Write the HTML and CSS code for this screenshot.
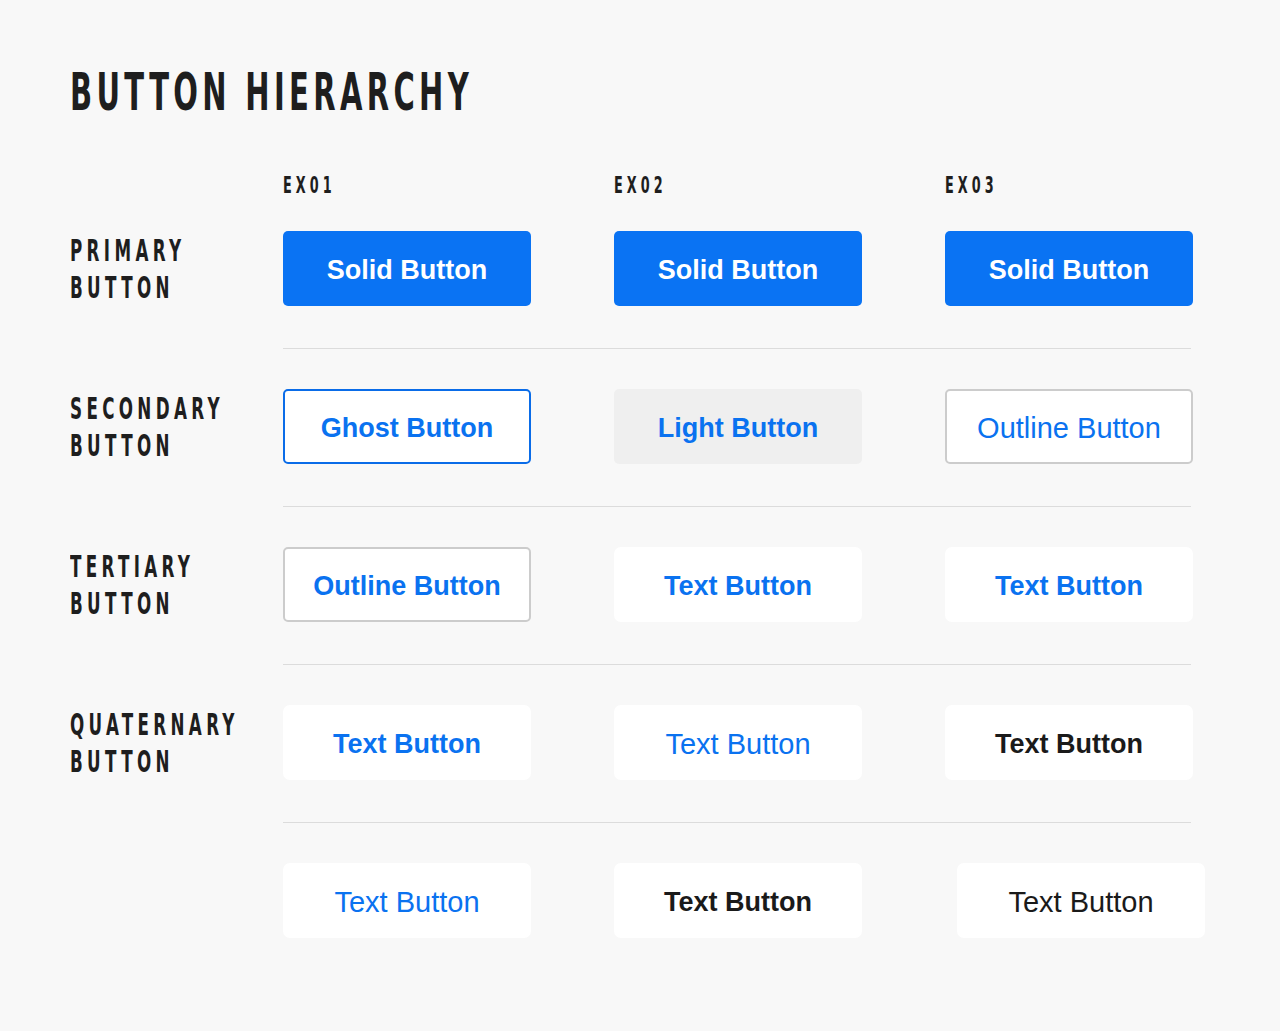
FILE: index.html
```html
<!DOCTYPE html>
<html lang="en">
<head>
  <meta charset="UTF-8" />
  <meta name="viewport" content="width=device-width, initial-scale=1.0"/>
  <title>Button Hierarchy</title>
  <link rel="stylesheet" href="styles.css">
</head>
<body>

<div class="page">
  <h1><span class="narrow">Button Hierarchy</span></h1>

  <div class="row head">
    <div class="label"></div>
    <div class="cells">
      <div class="col-title"><span class="narrow">EX01</span></div>
      <div class="col-title"><span class="narrow">EX02</span></div>
      <div class="col-title"><span class="narrow">EX03</span></div>
    </div>
  </div>

  <div class="row">
    <div class="label"><span class="narrow">Primary<br>Button</span></div>
    <div class="cells">
      <button class="btn solid">Solid Button</button>
      <button class="btn solid">Solid Button</button>
      <button class="btn solid">Solid Button</button>
    </div>
  </div>
  <div class="divider"></div>

  <div class="row">
    <div class="label"><span class="narrow">Secondary<br>Button</span></div>
    <div class="cells">
      <button class="btn ghost">Ghost Button</button>
      <button class="btn light">Light Button</button>
      <button class="btn outline regular">Outline Button</button>
    </div>
  </div>
  <div class="divider"></div>

  <div class="row">
    <div class="label"><span class="narrow">Tertiary<br>Button</span></div>
    <div class="cells">
      <button class="btn outline">Outline Button</button>
      <button class="btn plain">Text Button</button>
      <button class="btn plain">Text Button</button>
    </div>
  </div>
  <div class="divider"></div>

  <div class="row">
    <div class="label"><span class="narrow">Quaternary<br>Button</span></div>
    <div class="cells">
      <button class="btn plain">Text Button</button>
      <button class="btn plain regular">Text Button</button>
      <button class="btn plain dark">Text Button</button>
    </div>
  </div>
  <div class="divider"></div>

  <div class="row">
    <div class="label"></div>
    <div class="cells">
      <button class="btn plain regular">Text Button</button>
      <button class="btn plain dark">Text Button</button>
      <button class="btn plain dark regular nudge">Text Button</button>
    </div>
  </div>
</div>

</body>
</html>
```

FILE: styles.css
```css
* {
  box-sizing: border-box;
  margin: 0;
  padding: 0;
}
body {
  font-family: "Liberation Sans", Arial, sans-serif;
  background-color: #f8f8f8;
  color: #1c1c1c;
}
.page {
  padding: 62px 70px 0;
}
h1, .label, .col-title {
  font-family: "DejaVu Sans Condensed", "DejaVu Sans", sans-serif;
  text-transform: uppercase;
  color: #1e1e1e;
  white-space: nowrap;
}
/* no narrow display face installed, so squeeze the condensed one */
.narrow {
  display: inline-block;
  transform: scaleX(0.62);
  transform-origin: 0 50%;
}
h1 {
  font-size: 52px;
  line-height: 60px;
  font-weight: 700;
  letter-spacing: 7px;
  margin-bottom: 48px;
}
.row {
  display: flex;
  align-items: center;
}
.row.head {
  margin-bottom: 31px;
}
.label {
  width: 213px;
  flex-shrink: 0;
  font-size: 30px;
  line-height: 37px;
  font-weight: 700;
  letter-spacing: 7px;
}
.cells {
  display: flex;
  gap: 83px;
}
.col-title {
  width: 248px;
  font-size: 23px;
  font-weight: 700;
  letter-spacing: 6.5px;
  line-height: 30px;
}
.divider {
  margin: 42px 0 40px 213px;
  width: 908px;
  height: 1px;
  background-color: #dcdcdc;
}
.btn {
  width: 248px;
  height: 75px;
  padding-top: 3px;
  border: none;
  border-radius: 5px;
  font-family: "Liberation Sans", Arial, sans-serif;
  font-size: 27px;
  font-weight: 700;
  color: #0a72f0;
  background-color: #fff;
  cursor: pointer;
}
.btn.solid {
  background-color: #0a73f3;
  color: #fff;
}
.btn.ghost {
  border: 2px solid #0a6ce8;
}
.btn.light {
  background-color: #efefef;
}
.btn.outline {
  border: 2px solid #cccccc;
}
.btn.plain {
  border-radius: 7px;
}
.btn.dark {
  color: #1a1a1a;
}
.btn.regular {
  font-weight: 400;
  font-size: 29px;
}
.btn.nudge {
  margin-left: 12px;
}
```
